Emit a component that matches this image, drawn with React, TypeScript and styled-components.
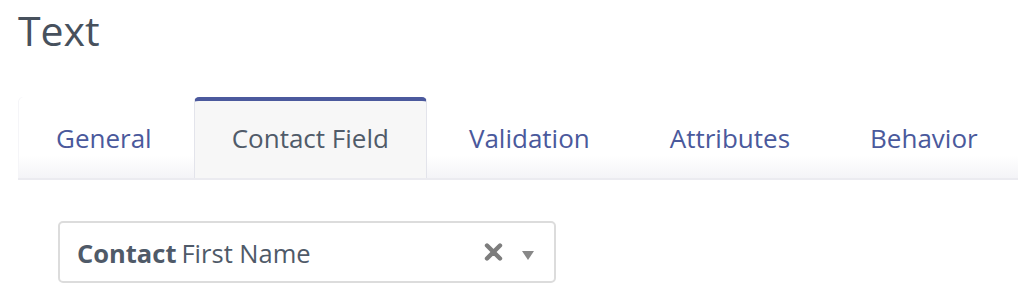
import React from "react";
import styled, { createGlobalStyle } from "styled-components";

const GlobalStyle = createGlobalStyle`
  html, body {
    margin: 0;
    padding: 0;
    background: #ffffff;
    font-family: "Open Sans", "Noto Sans", sans-serif;
  }
  * { box-sizing: border-box; }
`;

const Page = styled.div`
  padding: 10px 0 0 18px;
  width: 1018px;
  height: 308px;
  overflow: hidden;
`;

const Title = styled.h1`
  margin: 0;
  font-size: 41px;
  line-height: 1;
  font-weight: 400;
  color: #47515d;
`;

const TabBar = styled.div`
  display: flex;
  margin-top: 46px;
  border-bottom: 2px solid #ebebf0;
  border-top-left-radius: 5px;
  box-shadow: inset 1px 0 0 #f5f5f8;
  background: linear-gradient(to bottom, #ffffff 0%, #ffffff 72%, #f4f4f7 100%);
`;

const Tab = styled.div<{ $active?: boolean }>`
  height: 81px;
  padding: ${(p) => (p.$active ? "24px" : "27px")} 37px 0;
  margin-right: 4px;
  font-size: 26px;
  line-height: 1;
  white-space: nowrap;
  color: ${(p) => (p.$active ? "#505b69" : "#4a599c")};
  border: 1px solid ${(p) => (p.$active ? "#e3e4eb" : "transparent")};
  border-bottom: none;
  border-top: ${(p) => (p.$active ? "4px solid #4b599d" : "1px solid transparent")};
  border-radius: 5px 5px 0 0;
  background: ${(p) => (p.$active ? "#f7f7f7" : "transparent")};
`;

const Body = styled.div`
  padding: 41px 0 0 40px;
`;

const Select = styled.div`
  display: flex;
  align-items: center;
  width: 498px;
  height: 62px;
  padding: 4px 20px 0 17px;
  border: 2px solid #dcdcdc;
  border-radius: 5px;
  background: #fff;
`;

const Value = styled.div`
  flex: 1;
  font-size: 25.5px;
  line-height: 1;
  color: #4f5a68;
  white-space: nowrap;
`;

const Group = styled.span`
  font-weight: 700;
  margin-right: 5px;
`;

const Icons = styled.div`
  display: flex;
  align-items: center;
  gap: 19px;
  margin-top: -4px;
`;

const ClearIcon = () => (
  <svg width="19" height="18" viewBox="0 0 19 18">
    <path
      d="M3 2.5 L16 15.5 M16 2.5 L3 15.5"
      stroke="#7d7d7d"
      strokeWidth="4.4"
      strokeLinecap="round"
    />
  </svg>
);

const Caret = () => (
  <svg width="12" height="9" viewBox="0 0 12 9" style={{ marginTop: 6 }}>
    <polygon points="0,0 12,0 6,9" fill="#888888" />
  </svg>
);

const tabs = ["General", "Contact Field", "Validation", "Attributes", "Behavior"];

export default function App() {
  return (
    <>
      <GlobalStyle />
      <Page>
        <Title>Text</Title>
        <TabBar>
          {tabs.map((t) => (
            <Tab key={t} $active={t === "Contact Field"}>
              {t}
            </Tab>
          ))}
        </TabBar>
        <Body>
          <Select>
            <Value>
              <Group>Contact</Group>First Name
            </Value>
            <Icons>
              <ClearIcon />
              <Caret />
            </Icons>
          </Select>
        </Body>
      </Page>
    </>
  );
}
